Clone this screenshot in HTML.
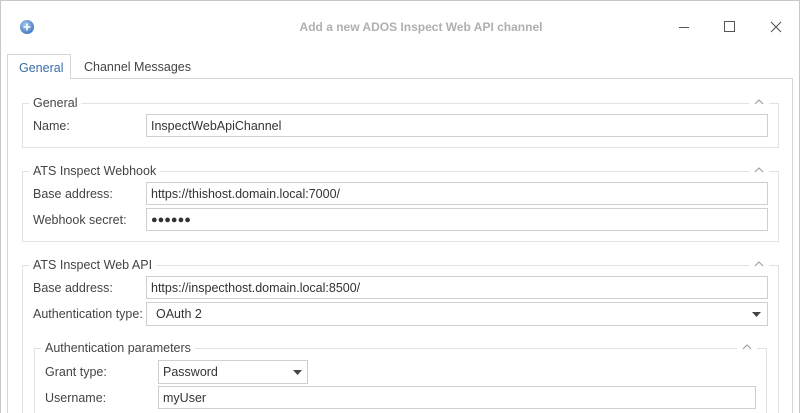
<!DOCTYPE html>
<html><head><style>
*{box-sizing:border-box;margin:0;padding:0}
html,body{width:800px;height:413px;overflow:hidden}
body{background:#fff;font-family:"Liberation Sans",sans-serif;font-size:12.5px;color:#444;position:relative}
.a{position:absolute}
.win{left:0;top:0;width:800px;height:413px;border:1px solid #c8c8c8;border-bottom:none}
.title{left:0;top:20px;width:842px;text-align:center;font-weight:bold;color:#b0b0b0;font-size:12px}
.frame{border:1px solid #e2e2e2}
.leg{background:#fff;padding:0 4px;color:#444}
.inp{border:1px solid #cfcfcf;background:#fff;padding:4px 4px;height:23px;color:#333;white-space:nowrap}
.chev{background:#fff;width:20px;height:10px}
</style></head><body>
<div class="a win"></div>
<svg class="a" style="left:19px;top:19px" width="16" height="16"><defs><radialGradient id="g" cx="40%" cy="35%" r="70%"><stop offset="0" stop-color="#a9c9ee"/><stop offset="1" stop-color="#3e76c0"/></radialGradient></defs><circle cx="8" cy="8" r="7" fill="url(#g)"/><path d="M8 4.5v7M4.5 8h7" stroke="#fff" stroke-width="1.6"/></svg>
<div class="a title">Add a new ADOS Inspect Web API channel</div>
<svg class="a" style="left:672px;top:20px" width="120" height="14"><path d="M7 7.5h10" stroke="#555"/><path d="M52.5 1.5h10v10h-10z" stroke="#555" fill="none"/><path d="M99 2l10 10M109 2l-10 10" stroke="#555" stroke-width="1.1"/></svg>
<div class="a" style="left:7px;top:54px;width:64px;height:25px;border:1px solid #d6d6d6;border-bottom:none;background:#fff;z-index:2;color:#3a6ea8;padding:6px 0 0 11px">General</div>
<div class="a" style="left:84px;top:60px;color:#444">Channel Messages</div>
<div class="a" style="left:7px;top:78px;width:786px;height:340px;border:1px solid #d6d6d6"></div>

<div class="a frame" style="left:22px;top:103px;width:757px;height:45px"></div>
<div class="a leg" style="left:29px;top:96px">General</div>
<svg class="a chev" style="left:749px;top:98px" width="20" height="10"><path d="M6 6l4-4 4 4" stroke="#999" fill="none"/></svg>
<div class="a" style="left:33px;top:119px">Name:</div>
<div class="a inp" style="left:146px;top:114px;width:622px">InspectWebApiChannel</div>

<div class="a frame" style="left:22px;top:171px;width:757px;height:71px"></div>
<div class="a leg" style="left:29px;top:164px">ATS Inspect Webhook</div>
<svg class="a chev" style="left:749px;top:166px" width="20" height="10"><path d="M6 6l4-4 4 4" stroke="#999" fill="none"/></svg>
<div class="a" style="left:33px;top:187px">Base address:</div>
<div class="a inp" style="left:146px;top:182px;width:622px">https://thishost.domain.local:7000/</div>
<div class="a" style="left:33px;top:213px">Webhook secret:</div>
<div class="a inp" style="left:146px;top:208px;width:622px;font-size:11px;padding-top:5px">●●●●●●</div>

<div class="a frame" style="left:22px;top:265px;width:757px;height:160px"></div>
<div class="a leg" style="left:29px;top:258px">ATS Inspect Web API</div>
<svg class="a chev" style="left:749px;top:260px" width="20" height="10"><path d="M6 6l4-4 4 4" stroke="#999" fill="none"/></svg>
<div class="a" style="left:33px;top:281px">Base address:</div>
<div class="a inp" style="left:146px;top:276px;width:622px">https://inspecthost.domain.local:8500/</div>
<div class="a" style="left:33px;top:307px">Authentication type:</div>
<div class="a inp" style="left:146px;top:302px;width:622px;height:24px;padding-left:9px">OAuth 2</div>
<svg class="a" style="left:752px;top:312px" width="9" height="6"><path d="M0 0h9L4.5 5z" fill="#444"/></svg>

<div class="a frame" style="left:34px;top:348px;width:733px;height:80px"></div>
<div class="a leg" style="left:41px;top:341px">Authentication parameters</div>
<svg class="a chev" style="left:737px;top:343px" width="20" height="10"><path d="M6 6l4-4 4 4" stroke="#999" fill="none"/></svg>
<div class="a" style="left:45px;top:365px">Grant type:</div>
<div class="a inp" style="left:158px;top:360px;width:150px;height:24px">Password</div>
<svg class="a" style="left:293px;top:370px" width="9" height="6"><path d="M0 0h9L4.5 5z" fill="#444"/></svg>
<div class="a" style="left:45px;top:391px">Username:</div>
<div class="a inp" style="left:158px;top:386px;width:598px">myUser</div>
</body></html>
